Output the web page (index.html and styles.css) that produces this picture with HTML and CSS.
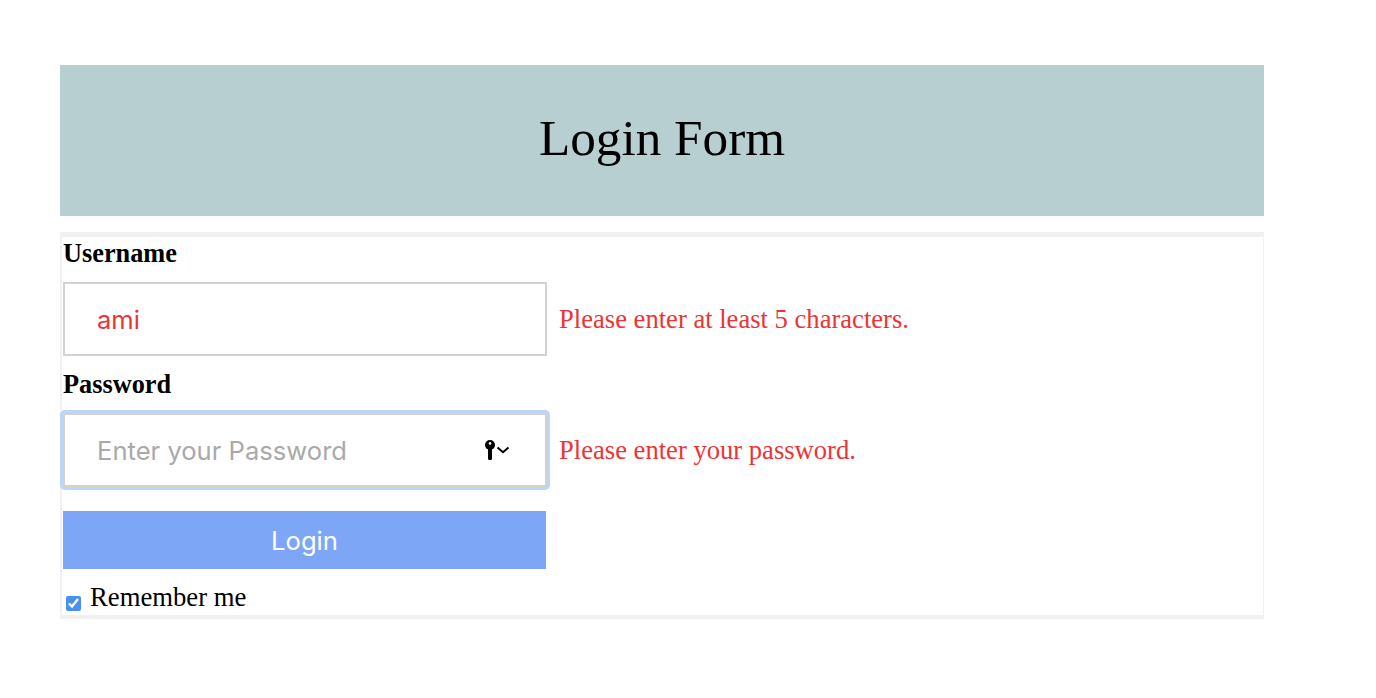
FILE: index.html
```html
<!DOCTYPE html>
<html lang="en">
<head>
    <meta charset="UTF-8">
    <title>Login Form</title>
    <link rel="stylesheet" href="styles.css">
</head>
<body>
    <div class="container">
        <div class="header">
            <h1>Login Form</h1>
        </div>
        <form class="login-form">
            <label class="field-label" for="username">Username</label>
            <div class="field-row">
                <input class="field-input invalid" id="username" type="text" value="ami">
                <span class="field-error">Please enter at least 5 characters.</span>
            </div>
            <label class="field-label" for="password">Password</label>
            <div class="field-row">
                <div class="input-wrap">
                    <input class="field-input focused" id="password" type="password" placeholder="Enter your Password">
                    <svg class="key-icon" width="28" height="20" viewBox="0 0 28 20">
                        <circle cx="5" cy="5" r="5" fill="#000"/>
                        <circle cx="5" cy="3.4" r="1.3" fill="#fff"/>
                        <path d="M3 9h4v9.2a2 2 0 0 1-4 0z" fill="#000"/>
                        <path d="M12.5 7.4l5.5 4.8 5.5-4.8" fill="none" stroke="#000" stroke-width="2"/>
                    </svg>
                </div>
                <span class="field-error">Please enter your password.</span>
            </div>
            <button class="login-button" type="button">Login</button>
            <label class="remember">
                <input class="remember-check" type="checkbox" checked>
                <span>Remember me</span>
            </label>
        </form>
    </div>
</body>
</html>
```

FILE: styles.css
```css
body {
    margin: 0;
    padding: 65px 112px 0 60px;
    background: #fff;
    font-family: "Liberation Serif", "Times New Roman", serif;
    color: #000;
}
.header {
    background-color: #b8cfd2;
    height: 151px;
    display: flex;
    justify-content: center;
    align-items: center;
}
.header h1 {
    margin: 0 0 6px 0;
    font-size: 51.2px;
    font-weight: normal;
    line-height: 58px;
}
.login-form {
    margin-top: 16px;
    border: 1px solid #f1f1f1;
    border-top-width: 5px;
    border-bottom-width: 4px;
    border-left-width: 2px;
    padding: 0 0 0 1px;
    height: 378px;
}
.field-label {
    display: block;
    font-size: 26.3px;
    font-weight: bold;
    line-height: 34px;
    height: 45px;
}
.field-row {
    display: flex;
    align-items: center;
    gap: 12px;
    margin-bottom: 12px;
}
.input-wrap {
    position: relative;
    display: flex;
}
.field-input {
    box-sizing: border-box;
    width: 484px;
    height: 74px;
    padding: 0 32px;
    border: 2px solid #d2d2d2;
    border-radius: 0;
    outline: none;
    font-family: Inter, "Liberation Sans", sans-serif;
    font-size: 25.6px;
    background: #fff;
}
.field-input::placeholder {
    color: #a9a9a9;
}
.field-input.invalid {
    color: #ee3333;
}
.field-input.focused {
    box-shadow: 0 0 0 3px #bdd6f7;
    border-radius: 2px;
}
.key-icon {
    position: absolute;
    top: 27px;
    right: 34px;
}
.field-error {
    color: #ee3333;
    font-size: 26.6px;
}
.login-button {
    display: block;
    width: 483px;
    height: 58px;
    margin-top: 24px;
    border: none;
    background-color: #7ea6f6;
    color: #fff;
    font-family: Inter, "Liberation Sans", sans-serif;
    font-size: 25.6px;
    cursor: pointer;
}
.remember {
    display: flex;
    align-items: flex-end;
    gap: 9px;
    margin-top: 12px;
    font-size: 26.7px;
    line-height: 32px;
}
.remember-check {
    width: 15px;
    height: 15px;
    margin: 0 0 2px 3px;
    accent-color: #4a90f0;
}
```
